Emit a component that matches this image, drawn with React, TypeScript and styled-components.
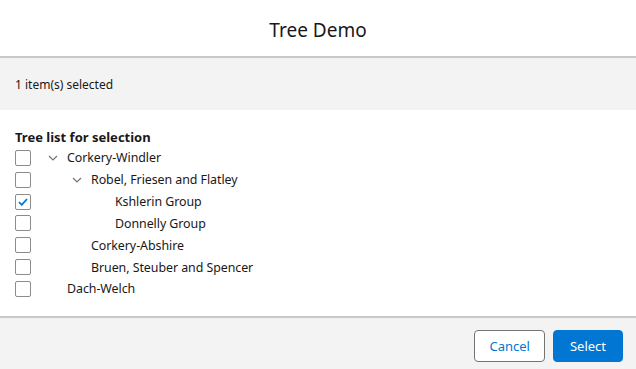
import styled, { createGlobalStyle } from 'styled-components';

const GlobalStyle = createGlobalStyle`
  html, body {
    margin: 0;
    padding: 0;
    background: #ffffff;
  }
  body {
    font-family: "Noto Sans", "Open Sans", "Liberation Sans", sans-serif;
    color: #181818;
  }
`;

type Node = { label: string; level: number; expandable?: boolean; checked?: boolean };

const nodes: Node[] = [
  { label: 'Corkery-Windler', level: 1, expandable: true },
  { label: 'Robel, Friesen and Flatley', level: 2, expandable: true },
  { label: 'Kshlerin Group', level: 3, checked: true },
  { label: 'Donnelly Group', level: 3 },
  { label: 'Corkery-Abshire', level: 2 },
  { label: 'Bruen, Steuber and Spencer', level: 2 },
  { label: 'Dach-Welch', level: 1 },
];

export default function App() {
  return (
    <>
      <GlobalStyle />
      <Modal>
        <Header>
          <Title>Tree Demo</Title>
        </Header>
        <Status>1 item(s) selected</Status>
        <Body>
          <Legend>Tree list for selection</Legend>
          <TreeList>
            {nodes.map((n) => (
              <Row key={n.label}>
                <Checkbox $checked={n.checked}>
                  {n.checked && (
                    <svg width="10" height="8" viewBox="0 0 10 8">
                      <path d="M1 4.2 L3.8 6.8 L9 1" fill="none" stroke="#0176d3" strokeWidth="1.8" />
                    </svg>
                  )}
                </Checkbox>
                <Indent $level={n.level}>
                  <Toggle>
                    {n.expandable && (
                      <svg width="10" height="6" viewBox="0 0 10 6">
                        <path d="M1 1 L5 5 L9 1" fill="none" stroke="#747474" strokeWidth="1.2" />
                      </svg>
                    )}
                  </Toggle>
                  <Label>{n.label}</Label>
                </Indent>
              </Row>
            ))}
          </TreeList>
        </Body>
        <Footer>
          <Button>Cancel</Button>
          <Button $brand>Select</Button>
        </Footer>
      </Modal>
    </>
  );
}

const Modal = styled.div`
  width: 636px;
  height: 369px;
  display: flex;
  flex-direction: column;
  background: #fff;
`;

const Header = styled.header`
  height: 56px;
  display: flex;
  align-items: center;
  justify-content: center;
  border-bottom: 2px solid #c9c9c9;
`;

const Title = styled.h2`
  margin: 0;
  font-size: 19px;
  font-weight: 400;
  color: #181818;
  padding-top: 4px;
`;

const Status = styled.div`
  height: 52px;
  display: flex;
  align-items: center;
  padding: 0 15px;
  background: #f3f3f3;
  font-size: 12px;
  color: #181818;
`;

const Body = styled.div`
  flex: 1;
  padding: 18px 15px 0;
`;

const Legend = styled.div`
  font-size: 13px;
  font-weight: 700;
  line-height: 18px;
  margin-bottom: 1px;
`;

const TreeList = styled.ul`
  list-style: none;
  margin: 0;
  padding: 0;
`;

const Row = styled.li`
  height: 21.85px;
  display: flex;
  align-items: center;
`;

const Checkbox = styled.span<{ $checked?: boolean }>`
  width: 14px;
  height: 14px;
  border: 1px solid #8c8c8c;
  border-radius: 2px;
  display: flex;
  align-items: center;
  justify-content: center;
  background: #fff;
  flex-shrink: 0;
`;

const Indent = styled.div<{ $level: number }>`
  display: flex;
  align-items: center;
  padding-left: ${(p) => 12 + (p.$level - 1) * 24}px;
`;

const Toggle = styled.span`
  width: 24px;
  height: 16px;
  display: flex;
  align-items: center;
  justify-content: flex-start;
  padding-left: 5px;
  box-sizing: border-box;
`;

const Label = styled.span`
  font-size: 12.4px;
  letter-spacing: -0.05px;
  color: #181818;
`;

const Footer = styled.footer`
  height: 53px;
  flex-shrink: 0;
  border-top: 2px solid #c9c9c9;
  background: #f3f3f3;
  display: flex;
  align-items: center;
  justify-content: flex-end;
  gap: 8px;
  padding: 5px 13px 0 0;
  box-sizing: border-box;
`;

const Button = styled.button<{ $brand?: boolean }>`
  height: 32px;
  padding: 0 ${(p) => (p.$brand ? 16 : 14)}px;
  border-radius: 4px;
  font-family: inherit;
  font-size: 13px;
  border: 1px solid ${(p) => (p.$brand ? '#0176d3' : '#747474')};
  background: ${(p) => (p.$brand ? '#0176d3' : '#ffffff')};
  color: ${(p) => (p.$brand ? '#ffffff' : '#0176d3')};
  cursor: pointer;
`;
